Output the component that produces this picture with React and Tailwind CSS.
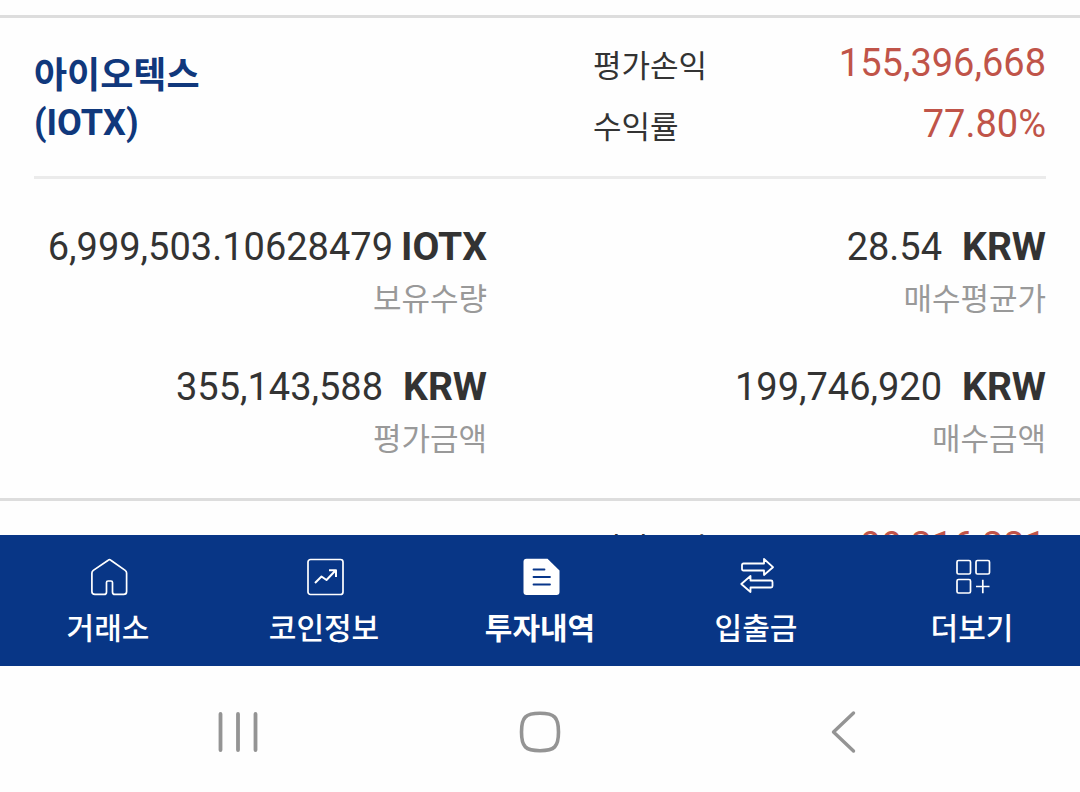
import React, { useState } from 'react';

const holdings = [
  {
    name: '아이오텍스',
    symbol: 'IOTX',
    profit: '155,396,668',
    rate: '77.80%',
    stats: [
      { label: '보유수량', value: '6,999,503.10628479', unit: 'IOTX', tight: true },
      { label: '매수평균가', value: '28.54', unit: 'KRW' },
      { label: '평가금액', value: '355,143,588', unit: 'KRW' },
      { label: '매수금액', value: '199,746,920', unit: 'KRW' },
    ],
  },
  {
    profit: '99,216,221',
    stats: [],
  },
];

const HomeIcon = () => (
  <svg width="40" height="40" viewBox="0 0 40 40" fill="none" stroke="currentColor" strokeWidth="1.7" strokeLinejoin="round">
    <path d="M20.2 3.2Q21.5 2.2 22.8 3.2L37.2 13.4Q38.6 14.4 38.6 16.1V34.4Q38.6 37.4 35.6 37.4H27Q24.5 37.4 24.5 34.9V25.5Q24.5 24 23 24H20Q18.5 24 18.5 25.5V34.9Q18.5 37.4 16 37.4H6.9Q3.9 37.4 3.9 34.4V16.1Q3.9 14.4 5.3 13.4Z" />
  </svg>
);

const ChartIcon = () => (
  <svg width="40" height="40" viewBox="0 0 40 40" fill="none" stroke="currentColor" strokeWidth="1.7" strokeLinejoin="round">
    <rect x="4" y="2.5" width="35" height="35" rx="2.5" />
    <path strokeWidth="2" d="M11 26L17.5 19.5L22.5 23L31.5 13.5M25 13.2H32V20" />
  </svg>
);

const DocIcon = () => (
  <svg width="40" height="40" viewBox="0 0 40 40">
    <path fill="currentColor" d="M6.5 1.8H27.5L39.5 13.5V35Q39.5 38 36.5 38H6.5Q3.5 38 3.5 35V4.8Q3.5 1.8 6.5 1.8Z" />
    <path stroke="#08368a" strokeWidth="1.8" strokeLinecap="round" d="M13.5 12.5H24.5M13.5 20H30M13.5 27.5H30" />
  </svg>
);

const TransferIcon = () => (
  <svg width="40" height="40" viewBox="0 0 40 40" fill="none" stroke="currentColor" strokeWidth="1.8" strokeLinejoin="round">
    <path d="M7.5 6.5H28V2L37 10.2L28 18V13.5H7.5Q6 13.5 6 12V8Q6 6.5 7.5 6.5Z" />
    <path d="M35 23.5H14.5V19L5.3 27L14.5 35V30.5H35Q36.5 30.5 36.5 29V25Q36.5 23.5 35 23.5Z" />
  </svg>
);

const MoreIcon = () => (
  <svg width="40" height="40" viewBox="0 0 40 40" fill="none" stroke="currentColor" strokeWidth="1.7">
    <rect x="5" y="3.5" width="13.5" height="13.5" rx="1.5" />
    <rect x="24" y="3.5" width="13.5" height="13.5" rx="1.5" />
    <rect x="5" y="22.5" width="13.5" height="13.5" rx="1.5" />
    <path d="M24 29.5H37.5M30.8 22.8V36.3" />
  </svg>
);

const tabs = [
  { id: 'exchange', label: '거래소', Icon: HomeIcon },
  { id: 'info', label: '코인정보', Icon: ChartIcon },
  { id: 'portfolio', label: '투자내역', Icon: DocIcon },
  { id: 'wallet', label: '입출금', Icon: TransferIcon },
  { id: 'more', label: '더보기', Icon: MoreIcon },
];

const HoldingCard = ({ coin }) => (
  <section className="border-t-[3px] border-[#dddddd]">
    <div className="px-[34px]">
      <div className="grid grid-cols-2 gap-x-[106px] pt-[15px] pb-[21px] border-b-[3px] border-[#ebebeb]">
        <h2 className="pt-5 text-[36px] leading-[47px] font-bold text-[#10387c]">
          {coin.name}
          <br />
          {coin.symbol && `(${coin.symbol})`}
        </h2>
        <dl>
          <div className="flex items-end justify-between">
            <dt className="text-[31px] leading-[54px] text-[#333333]">평가손익</dt>
            <dd className="text-[38px] leading-[61px] text-[#c05449]">{coin.profit}</dd>
          </div>
          <div className="flex items-end justify-between">
            <dt className="text-[31px] leading-[54px] text-[#333333]">수익률</dt>
            <dd className="text-[38px] leading-[61px] text-[#c05449]">{coin.rate}</dd>
          </div>
        </dl>
      </div>

      <dl className="grid grid-cols-2 gap-x-[106px] gap-y-[34px] pt-[41px] pb-8">
        {coin.stats.map((stat) => (
          <div key={stat.label} className="flex flex-col-reverse items-end">
            <dt className="text-[31px] leading-[52px] text-[#999999]">{stat.label}</dt>
            <dd className={`flex text-[38px] leading-[54px] text-[#333333] ${stat.tight ? 'gap-2' : 'gap-5'}`}>
              <span>{stat.value}</span>
              <b className="text-[39px] font-bold">{stat.unit}</b>
            </dd>
          </div>
        ))}
      </dl>
    </div>
  </section>
);

const App = () => {
  const [active, setActive] = useState('portfolio');

  return (
    <div className="flex flex-col h-screen bg-[#fefefe] font-[Roboto,'Noto_Sans_CJK_KR',sans-serif]" lang="ko">
      <main className="flex-1 min-h-0 overflow-hidden pt-[15px]">
        {holdings.map((coin) => (
          <HoldingCard key={coin.profit} coin={coin} />
        ))}
      </main>

      <nav className="grid grid-cols-5 bg-[#083686] text-white pt-[22px] pb-3.5">
        {tabs.map(({ id, label, Icon }) => (
          <button
            key={id}
            type="button"
            onClick={() => setActive(id)}
            className={`flex flex-col items-center gap-2 text-[30px] leading-[47px] ${
              active === id ? 'font-bold' : 'font-medium'
            }`}
          >
            <Icon />
            {label}
          </button>
        ))}
      </nav>

      {/* system navigation */}
      <div className="grid grid-cols-3 justify-items-center px-[8%] pt-[44px] pb-[38px] text-[#949494]">
        <button type="button" aria-label="Recents">
          <svg width="44" height="44" viewBox="0 0 44 44" stroke="currentColor" strokeWidth="3.8" strokeLinecap="round">
            <path d="M4.5 4V40M22 4V40M39.5 4V40" />
          </svg>
        </button>
        <button type="button" aria-label="Home">
          <svg width="44" height="44" viewBox="0 0 44 44" fill="none" stroke="currentColor" strokeWidth="3.6">
            <path d="M22 3.3C36.5 3.3 40.5 7.3 40.5 22S36.5 40.7 22 40.7S3.5 36.7 3.5 22S7.5 3.3 22 3.3Z" />
          </svg>
        </button>
        <button type="button" aria-label="Back">
          <svg width="44" height="44" viewBox="0 0 44 44" fill="none" stroke="currentColor" strokeWidth="3.4" strokeLinecap="round" strokeLinejoin="round">
            <path d="M33.5 3L13.5 22L33.5 41" />
          </svg>
        </button>
      </div>
    </div>
  );
};

export default App;
